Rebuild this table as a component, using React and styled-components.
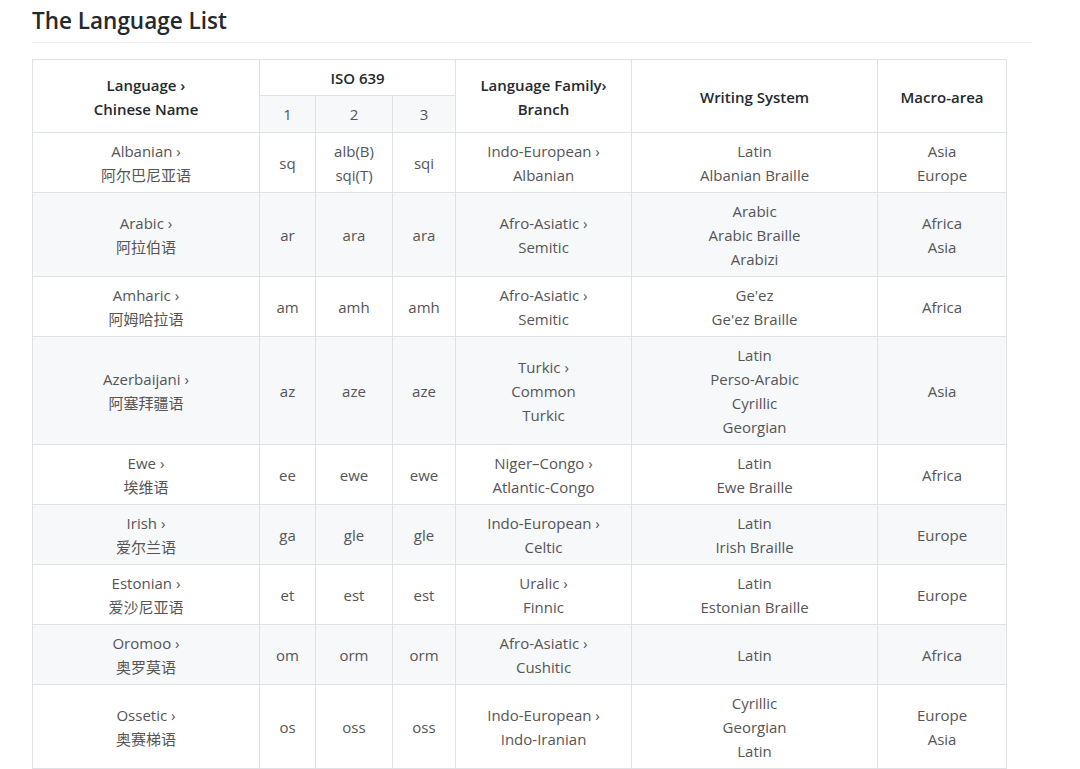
import React from 'react'
import styled, { createGlobalStyle } from 'styled-components'

const GlobalStyle = createGlobalStyle`
  body {
    margin: 0;
    background: #fff;
    font-family: "Open Sans", "Noto Sans", "Noto Sans CJK SC", sans-serif;
  }
`

const columns = [227, 56, 77, 63, 176, 246, 129]

const languages = [
  { name: 'Albanian', zh: '阿尔巴尼亚语', iso: ['sq', ['alb(B)', 'sqi(T)'], 'sqi'], family: ['Indo-European ›', 'Albanian'], writing: ['Latin', 'Albanian Braille'], area: ['Asia', 'Europe'] },
  { name: 'Arabic', zh: '阿拉伯语', iso: ['ar', 'ara', 'ara'], family: ['Afro-Asiatic ›', 'Semitic'], writing: ['Arabic', 'Arabic Braille', 'Arabizi'], area: ['Africa', 'Asia'] },
  { name: 'Amharic', zh: '阿姆哈拉语', iso: ['am', 'amh', 'amh'], family: ['Afro-Asiatic ›', 'Semitic'], writing: ['Ge\'ez', 'Ge\'ez Braille'], area: ['Africa'] },
  { name: 'Azerbaijani', zh: '阿塞拜疆语', iso: ['az', 'aze', 'aze'], family: ['Turkic ›', 'Common', 'Turkic'], writing: ['Latin', 'Perso-Arabic', 'Cyrillic', 'Georgian'], area: ['Asia'] },
  { name: 'Ewe', zh: '埃维语', iso: ['ee', 'ewe', 'ewe'], family: ['Niger–Congo ›', 'Atlantic-Congo'], writing: ['Latin', 'Ewe Braille'], area: ['Africa'] },
  { name: 'Irish', zh: '爱尔兰语', iso: ['ga', 'gle', 'gle'], family: ['Indo-European ›', 'Celtic'], writing: ['Latin', 'Irish Braille'], area: ['Europe'] },
  { name: 'Estonian', zh: '爱沙尼亚语', iso: ['et', 'est', 'est'], family: ['Uralic ›', 'Finnic'], writing: ['Latin', 'Estonian Braille'], area: ['Europe'] },
  { name: 'Oromoo', zh: '奥罗莫语', iso: ['om', 'orm', 'orm'], family: ['Afro-Asiatic ›', 'Cushitic'], writing: ['Latin'], area: ['Africa'] },
  { name: 'Ossetic', zh: '奥赛梯语', iso: ['os', 'oss', 'oss'], family: ['Indo-European ›', 'Indo-Iranian'], writing: ['Cyrillic', 'Georgian', 'Latin'], area: ['Europe', 'Asia'] },
]

const Lines = ({ items }) => (
  <>
    {[].concat(items).map((line, i) => (
      <React.Fragment key={i}>
        {i > 0 && <br />}
        {line}
      </React.Fragment>
    ))}
  </>
)

const App = () => {
  return (
    <Page>
      <GlobalStyle />
      <Heading>The Language List</Heading>
      <Table>
        <colgroup>
          {columns.map((w, i) => <Col key={i} $width={w} />)}
        </colgroup>
        <thead>
          <Row>
            <Th rowSpan={2}>Language ›<br />Chinese Name</Th>
            <Th colSpan={3}>ISO 639</Th>
            <Th rowSpan={2}>Language Family›<br />Branch</Th>
            <Th rowSpan={2}>Writing System</Th>
            <Th rowSpan={2}>Macro-area</Th>
          </Row>
          <Row $striped>
            <SubTh>1</SubTh>
            <SubTh>2</SubTh>
            <SubTh>3</SubTh>
          </Row>
        </thead>
        <tbody>
          {languages.map((lang, index) => (
            <Row key={lang.name} $striped={index % 2 === 1}>
              <Td>{lang.name} ›<br /><Chinese>{lang.zh}</Chinese></Td>
              {lang.iso.map((code, i) => (
                <Td key={i}><Lines items={code} /></Td>
              ))}
              <Td><Lines items={lang.family} /></Td>
              <Td><Lines items={lang.writing} /></Td>
              <Td><Lines items={lang.area} /></Td>
            </Row>
          ))}
        </tbody>
      </Table>
    </Page>
  )
}

export default App

const Page = styled.div`
  width: 1000px;
  padding: 6px 0 0 32px;
  color: #24292e;
  font-size: 15px;
  line-height: 24px;
`

const Heading = styled.h2`
  margin: 0 0 16px;
  padding-bottom: 6px;
  font-size: 22.5px;
  font-weight: 600;
  line-height: 30px;
  color: #24292e;
  border-bottom: 1px solid #eaecef;
`

const Table = styled.table`
  border-collapse: collapse;
  border-spacing: 0;
  table-layout: fixed;
  width: 974px;
`

const Col = styled.col`
  width: ${props => props.$width}px;
`

const Row = styled.tr`
  background: ${props => props.$striped ? '#f6f8fa' : '#fff'};
  border-top: 1px solid #dfe2e5;
`

const Th = styled.th`
  padding: 6px 4px 5px;
  border: 1px solid #dfe2e5;
  text-align: center;
  font-weight: 600;
  color: #24292e;
`

const SubTh = styled(Th)`
  padding-bottom: 6px;
  font-weight: 400;
  color: #555;
`

const Td = styled.td`
  padding: 6px 4px 5px;
  border: 1px solid #dfe2e5;
  text-align: center;
  color: #555;
`

const Chinese = styled.span`
  font-family: "Noto Sans CJK SC", sans-serif;
`
